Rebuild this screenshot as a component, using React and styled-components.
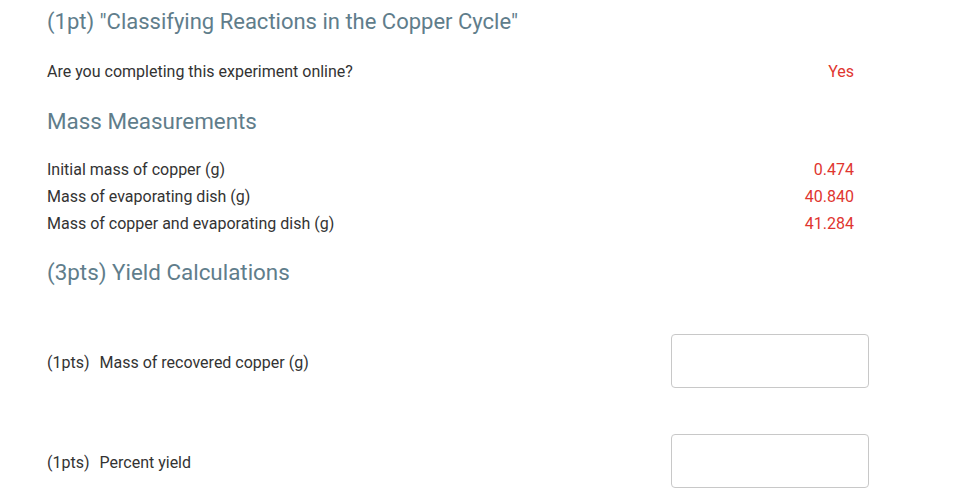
import React from "react";
import styled, { createGlobalStyle } from "styled-components";

const GlobalStyle = createGlobalStyle`
  body {
    margin: 0;
    background: #fff;
    font-family: Roboto, "Liberation Sans", sans-serif;
    color: #333;
  }
`;

const measurements = [
  { label: "Initial mass of copper (g)", value: "0.474" },
  { label: "Mass of evaporating dish (g)", value: "40.840" },
  { label: "Mass of copper and evaporating dish (g)", value: "41.284" },
];

const answers = [
  { pts: "(1pts)", label: "Mass of recovered copper (g)" },
  { pts: "(1pts)", label: "Percent yield" },
];

const App = () => {
  return (
    <>
      <GlobalStyle />
      <Page>
        <Title>(1pt) "Classifying Reactions in the Copper Cycle"</Title>
        <QuestionRow>
          <span>Are you completing this experiment online?</span>
          <Value>Yes</Value>
        </QuestionRow>
        <Heading>Mass Measurements</Heading>
        <DataList>
          {measurements.map((m) => (
            <DataRow key={m.label}>
              <span>{m.label}</span>
              <Value>{m.value}</Value>
            </DataRow>
          ))}
        </DataList>
        <Heading>(3pts) Yield Calculations</Heading>
        <AnswerList>
          {answers.map((a) => (
            <AnswerRow key={a.label}>
              <AnswerLabel>
                <Pts>{a.pts}</Pts>
                {a.label}
              </AnswerLabel>
              <AnswerInput type="text" />
            </AnswerRow>
          ))}
        </AnswerList>
      </Page>
    </>
  );
};

const Page = styled.div`
  display: flex;
  flex-direction: column;
  padding: 8px 0 0 47px;
  width: 822px;
`;

const Title = styled.div`
  font-size: 22px;
  line-height: 28px;
  color: #607d8b;
`;

const Heading = styled.div`
  font-size: 22.4px;
  line-height: 26px;
  color: #607d8b;
`;

const QuestionRow = styled.div`
  display: flex;
  justify-content: space-between;
  font-size: 16px;
  line-height: 20px;
  margin: 26px 15px 26px 0;
`;

const Value = styled.span`
  color: #e0352f;
`;

const DataList = styled.div`
  display: flex;
  flex-direction: column;
  margin: 22px 15px 22px 0;
`;

const DataRow = styled.div`
  display: flex;
  justify-content: space-between;
  font-size: 16px;
  line-height: 27px;
`;

const AnswerList = styled.div`
  display: flex;
  flex-direction: column;
  gap: 46px;
  margin-top: 49px;
`;

const AnswerRow = styled.div`
  display: flex;
  align-items: center;
  justify-content: space-between;
`;

const AnswerLabel = styled.span`
  font-size: 16px;
  padding-top: 2px;
`;

const Pts = styled.span`
  margin-right: 10px;
`;

const AnswerInput = styled.input`
  width: 198px;
  height: 54px;
  box-sizing: border-box;
  border: 1px solid #c8c8c8;
  border-radius: 4px;
  padding: 0 10px;
  font-family: inherit;
  font-size: 16px;
`;

export default App;
